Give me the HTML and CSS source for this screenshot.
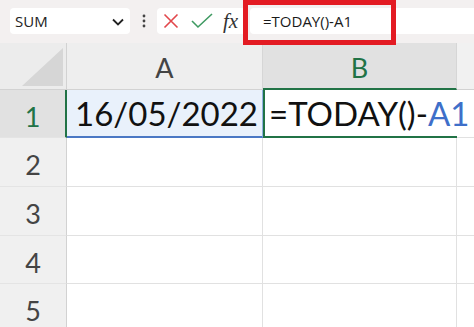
FILE: index.html
```html
<!DOCTYPE html>
<html>
<head>
<meta charset="utf-8">
<link rel="stylesheet" href="styles.css">
</head>
<body>
<div class="app">
  <div class="topbar">
    <div class="namebox">
      <span class="name">SUM</span>
      <svg class="chev" width="12" height="8" viewBox="0 0 12 8"><polyline points="1,1.5 6,6.5 11,1.5" fill="none" stroke="#222" stroke-width="1.8"/></svg>
    </div>
    <div class="grip">
      <svg width="4" height="14" viewBox="0 0 4 14"><circle cx="2" cy="2" r="1.4" fill="#444"/><circle cx="2" cy="7" r="1.4" fill="#444"/><circle cx="2" cy="12" r="1.4" fill="#444"/></svg>
    </div>
    <div class="iconbox">
      <svg class="ico" width="16" height="16" viewBox="0 0 16 16"><path d="M1.5 1.5 L14.5 14.5 M14.5 1.5 L1.5 14.5" stroke="#e2474b" stroke-width="1.6" fill="none"/></svg>
      <svg class="ico" width="22" height="16" viewBox="0 0 22 16"><polyline points="1,8 7,14 21,1" stroke="#3f9a62" stroke-width="1.6" fill="none"/></svg>
      <span class="fx">fx</span>
    </div>
    <div class="inputbox"><span class="ftext">=TODAY()-A1</span></div>
    <div class="annot"></div>
  </div>
  <div class="sheet">
    <div class="corner"><div class="tri"></div></div>
    <div class="colhead">A</div>
    <div class="colhead sel">B</div>
    <div class="colhead rest"></div>

    <div class="rowhead sel">1</div>
    <div class="cell ref">16/05/2022</div>
    <div class="cell active"><span>=TODAY()-</span><span class="blue">A1</span></div>
    <div class="cell rest"></div>

    <div class="rowhead">2</div>
    <div class="cell"></div><div class="cell"></div><div class="cell rest"></div>
    <div class="rowhead">3</div>
    <div class="cell"></div><div class="cell"></div><div class="cell rest"></div>
    <div class="rowhead">4</div>
    <div class="cell"></div><div class="cell"></div><div class="cell rest"></div>
    <div class="rowhead">5</div>
    <div class="cell"></div><div class="cell"></div><div class="cell rest"></div>
  </div>
</div>
</body>
</html>
```
FILE: styles.css
```css
* { box-sizing: border-box; }
html, body { margin: 0; padding: 0; }
body {
  width: 474px;
  height: 327px;
  overflow: hidden;
  background: #ffffff;
  font-family: "Open Sans", sans-serif;
}
.app { position: relative; }
.topbar {
  position: relative;
  height: 43px;
  background: #f3f0f0;
  display: flex;
  align-items: flex-start;
  padding-top: 8px;
  padding-left: 10px;
}
.namebox {
  width: 120px;
  height: 26px;
  background: #fff;
  border-radius: 4px;
  display: flex;
  align-items: center;
  justify-content: space-between;
  padding: 0 6px 0 5px;
}
.name { font-size: 15px; color: #222; }
.chev { margin-top: 2px; }
.grip {
  width: 27px;
  height: 26px;
  display: flex;
  align-items: center;
  justify-content: center;
}
.iconbox {
  width: 89px;
  height: 26px;
  background: #fff;
  border-radius: 4px;
  display: flex;
  align-items: center;
  padding-left: 6px;
  gap: 12px;
}
.fx {
  font-family: "Liberation Serif", serif;
  font-style: italic;
  font-size: 21px;
  color: #333;
  margin-left: -2px;
  line-height: 1;
}
.inputbox {
  flex: 1;
  margin-left: 4px;
  height: 26px;
  background: #fff;
  border-radius: 4px 0 0 4px;
  display: flex;
  align-items: center;
  padding-left: 13px;
}
.ftext { font-size: 15px; color: #1a1a1a; }
.annot {
  position: absolute;
  left: 243px;
  top: 0;
  width: 153px;
  height: 45px;
  border: 5px solid #e31b23;
  z-index: 5;
}
.sheet {
  display: grid;
  grid-template-columns: 67px 196px 194px 1fr;
  grid-template-rows: 47px 48px 49px 49px 48px 48px;
  font-family: "Lato", sans-serif;
}
.corner {
  background: #ececec;
  border-right: 1px solid #d2d2d2;
  border-bottom: 1px solid #d2d2d2;
  position: relative;
}
.tri {
  position: absolute;
  right: 3px;
  bottom: 3px;
  width: 0;
  height: 0;
  border-left: 41px solid transparent;
  border-bottom: 38px solid #d6d6d6;
}
.colhead {
  background: #eeeeee;
  border-right: 1px solid #d6d6d6;
  border-bottom: 1px solid #d2d2d2;
  display: flex;
  align-items: flex-end;
  justify-content: center;
  padding-bottom: 8px;
  font-size: 27px;
  line-height: 1;
  color: #444;
}
.colhead.sel {
  background: #e1e1e1;
  color: #217346;
  border-bottom: 2px solid #217346;
  padding-bottom: 7px;
}
.colhead.rest { background: #f1f1f1; border-right: none; }
.rowhead {
  background: #f0f0f0;
  border-right: 1px solid #d2d2d2;
  border-bottom: 1px solid #e4e4e4;
  display: flex;
  align-items: center;
  justify-content: center;
  padding-top: 5px;
  font-size: 27px;
  line-height: 1;
  color: #444;
}
.rowhead.sel {
  background: #e1e1e1;
  color: #217346;
  border-right: 2px solid #217346;
}
.cell {
  border-right: 1px solid #e1e1e1;
  border-bottom: 1px solid #e1e1e1;
  font-size: 33px;
  line-height: 1;
  color: #111;
  display: flex;
  align-items: center;
}
.cell.rest { border-right: none; }
.cell.ref {
  background: #e9f1fb;
  border-bottom: 2px solid #4a78c4;
  border-right: 1px solid #8fb0e0;
  justify-content: flex-end;
  padding-right: 4px;
  padding-top: 1px;
  position: relative;
}
.cell.active {
  border-left: 2px solid #217346;
  border-bottom: 2px solid #217346;
  border-right: none;
  padding-left: 4px;
  padding-top: 1px;
  white-space: nowrap;
  position: relative;
  z-index: 2;
}
.blue { color: #3e6fc9; }
```
